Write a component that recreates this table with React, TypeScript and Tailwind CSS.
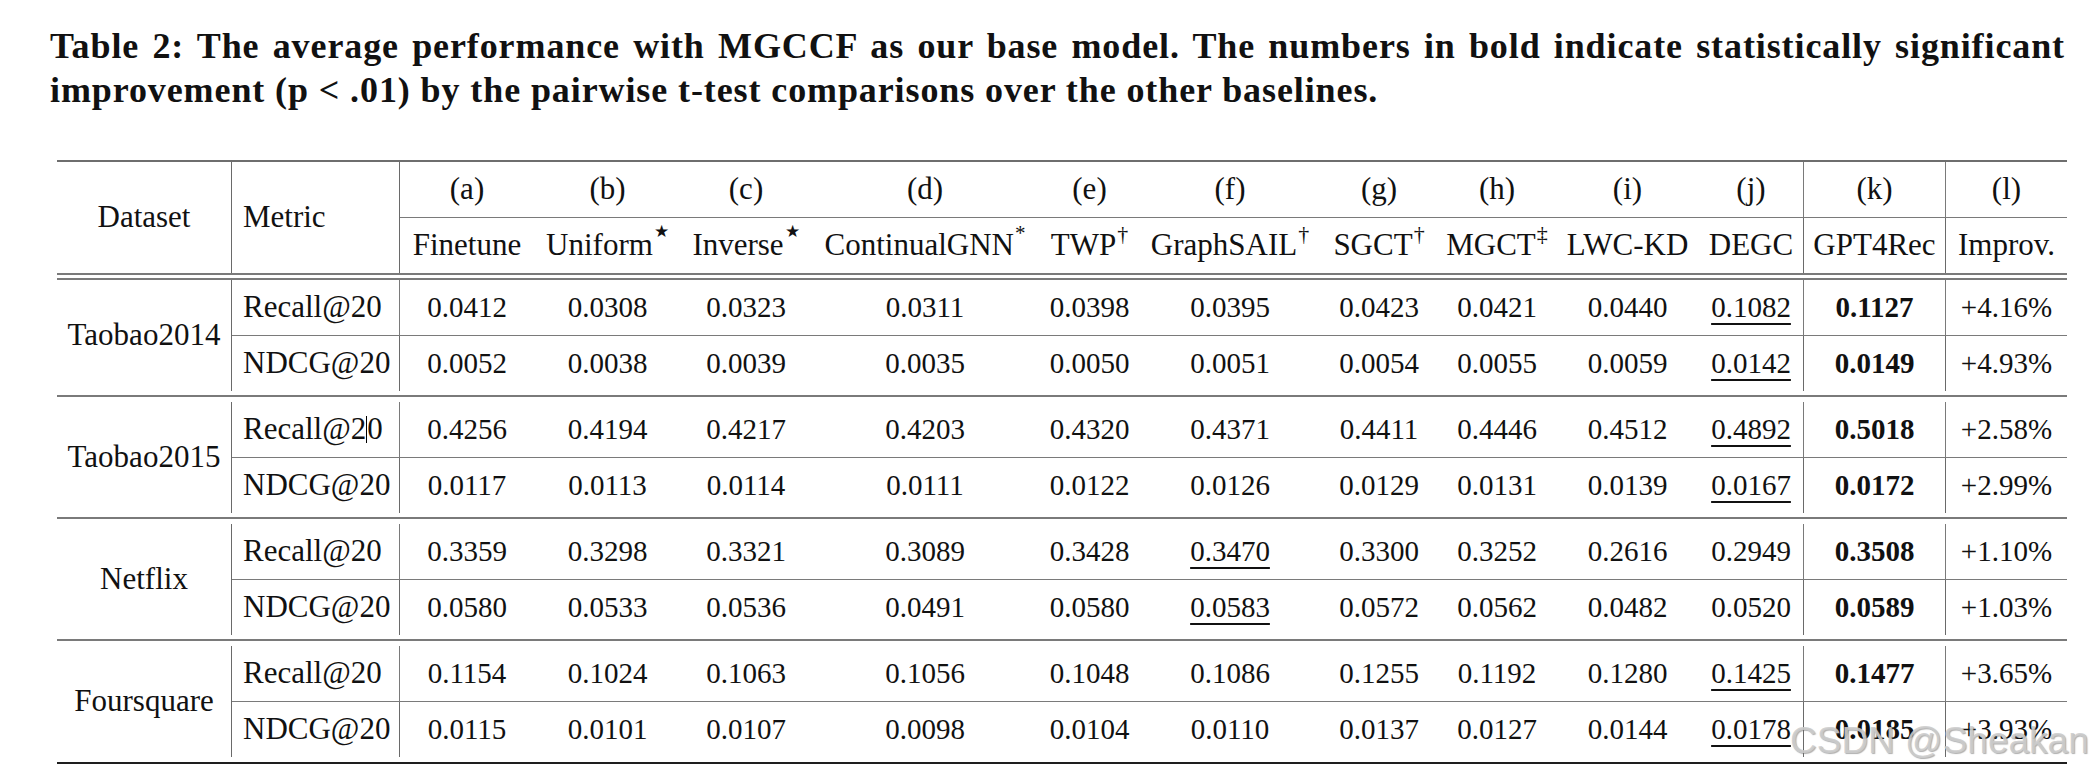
import React from "react";

const COLS =
  "grid grid-cols-[175px_168px_134px_147px_130px_228px_101px_180px_118px_118px_143px_105px_142px_121px]";

type Row = { m: React.ReactNode; v: string[]; k: string; l: string; u: number[] };
type Group = { name: string; rows: Row[] };

const groups: Group[] = [
  {
    name: "Taobao2014",
    rows: [
      { m: "Recall@20", v: ["0.0412", "0.0308", "0.0323", "0.0311", "0.0398", "0.0395", "0.0423", "0.0421", "0.0440", "0.1082"], k: "0.1127", l: "+4.16%", u: [9] },
      { m: "NDCG@20", v: ["0.0052", "0.0038", "0.0039", "0.0035", "0.0050", "0.0051", "0.0054", "0.0055", "0.0059", "0.0142"], k: "0.0149", l: "+4.93%", u: [9] },
    ],
  },
  {
    name: "Taobao2015",
    rows: [
      {
        m: (
          <>
            Recall@2
            <span className="inline-block w-px h-[27px] bg-black align-[-4px]" />0
          </>
        ),
        v: ["0.4256", "0.4194", "0.4217", "0.4203", "0.4320", "0.4371", "0.4411", "0.4446", "0.4512", "0.4892"],
        k: "0.5018",
        l: "+2.58%",
        u: [9],
      },
      { m: "NDCG@20", v: ["0.0117", "0.0113", "0.0114", "0.0111", "0.0122", "0.0126", "0.0129", "0.0131", "0.0139", "0.0167"], k: "0.0172", l: "+2.99%", u: [9] },
    ],
  },
  {
    name: "Netflix",
    rows: [
      { m: "Recall@20", v: ["0.3359", "0.3298", "0.3321", "0.3089", "0.3428", "0.3470", "0.3300", "0.3252", "0.2616", "0.2949"], k: "0.3508", l: "+1.10%", u: [5] },
      { m: "NDCG@20", v: ["0.0580", "0.0533", "0.0536", "0.0491", "0.0580", "0.0583", "0.0572", "0.0562", "0.0482", "0.0520"], k: "0.0589", l: "+1.03%", u: [5] },
    ],
  },
  {
    name: "Foursquare",
    rows: [
      { m: "Recall@20", v: ["0.1154", "0.1024", "0.1063", "0.1056", "0.1048", "0.1086", "0.1255", "0.1192", "0.1280", "0.1425"], k: "0.1477", l: "+3.65%", u: [9] },
      { m: "NDCG@20", v: ["0.0115", "0.0101", "0.0107", "0.0098", "0.0104", "0.0110", "0.0137", "0.0127", "0.0144", "0.0178"], k: "0.0185", l: "+3.93%", u: [9] },
    ],
  },
];

const letters = ["(a)", "(b)", "(c)", "(d)", "(e)", "(f)", "(g)", "(h)", "(i)", "(j)", "(k)", "(l)"];

const Star = () => <span className="text-[17px] relative top-[-14px] ml-[1px]">★</span>;
const Sup = ({ c, size = "text-[22px]" }: { c: string; size?: string }) => (
  <span className={`${size} relative top-[-12px] ml-[1px]`}>{c}</span>
);

const names: React.ReactNode[] = [
  "Finetune",
  <>Uniform<Star /></>,
  <>Inverse<Star /></>,
  <>ContinualGNN<Sup c="*" size="text-[21px]" /></>,
  <>TWP<Sup c="†" /></>,
  <>GraphSAIL<Sup c="†" /></>,
  <>SGCT<Sup c="†" /></>,
  <>MGCT<Sup c="‡" /></>,
  "LWC-KD",
  "DEGC",
  "GPT4Rec",
  "Improv.",
];

const VLINE = "border-r border-[#6a6a6a]";
const HLINE = "border-b border-[#7a7a7a]";

function GroupBlock({ g }: { g: Group }) {
  return (
    <div className={COLS}>
      <div className={`row-span-2 flex items-center justify-center text-[31px] ${VLINE}`}>{g.name}</div>
      {g.rows.map((r, ri) => {
        const line = ri === 0 ? HLINE : "";
        return (
          <React.Fragment key={ri}>
            <div className={`flex items-center pl-[11px] text-[31px] whitespace-nowrap ${VLINE} ${line} ${ri === 0 ? "h-[56px]" : "h-[55px]"}`}>
              {r.m}
            </div>
            {r.v.map((x, i) => (
              <div
                key={i}
                className={`flex items-center justify-center text-[29px] ${line} ${i === 9 ? VLINE : ""}`}
              >
                <span className={r.u.includes(i) ? "underline decoration-[1.6px] underline-offset-[6px]" : ""}>{x}</span>
              </div>
            ))}
            <div className={`flex items-center justify-center text-[29px] font-bold ${VLINE} ${line}`}>{r.k}</div>
            <div className={`flex items-center justify-center text-[29px] ${line}`}>{r.l}</div>
          </React.Fragment>
        );
      })}
    </div>
  );
}

export default function App() {
  return (
    <div
      className="relative w-[2099px] h-[781px] bg-white text-[#111] overflow-hidden"
      style={{ fontFamily: '"Liberation Serif", "Times New Roman", serif' }}
    >
      <div className="pl-[50px] pt-[24px] w-[2065px] font-bold text-[36px] leading-[44px] tracking-[0.9px]">
        <div className="whitespace-nowrap [text-align:justify] [text-align-last:justify]">
          Table 2: The average performance with MGCCF as our base model. The numbers in bold indicate statistically significant
        </div>
        <div className="whitespace-nowrap">
          improvement (p &lt; .01) by the pairwise t-test comparisons over the other baselines.
        </div>
      </div>

      <div className="ml-[57px] mt-[48px] w-[2010px]">
        {/* top rule */}
        <div className="h-[2px] bg-[#6e6e6e]" />
        {/* header */}
        <div className={COLS}>
          <div className={`row-span-2 flex items-center justify-center text-[31px] ${VLINE}`}>Dataset</div>
          <div className={`row-span-2 flex items-center pl-[11px] text-[31px] ${VLINE}`}>Metric</div>
          {letters.map((l, i) => (
            <div
              key={l}
              className={`h-[56px] flex items-center justify-center text-[31px] ${HLINE} ${i === 9 || i === 10 ? VLINE : ""}`}
            >
              {l}
            </div>
          ))}
          {names.map((n, i) => (
            <div
              key={i}
              className={`h-[55px] flex items-center justify-center text-[31px] whitespace-nowrap ${i === 9 || i === 10 ? VLINE : ""}`}
            >
              {n}
            </div>
          ))}
        </div>
        {/* double rule */}
        <div className="h-[2px] bg-[#7a7a7a]" />
        <div className="h-[3px]" />
        <div className="h-[2px] bg-[#7a7a7a]" />

        {groups.map((g, gi) => (
          <div key={g.name}>
            <GroupBlock g={g} />
            {gi < groups.length - 1 ? (
              <div className="pt-[4px] pb-[5px]">
                <div className="h-[2px] bg-[#7a7a7a]" />
              </div>
            ) : (
              <div className="pt-[5px]">
                <div className="h-[2px] bg-[#1e1e1e]" />
              </div>
            )}
          </div>
        ))}
      </div>

      <div
        className="absolute left-[1790px] top-[722px] text-[37px] leading-none whitespace-nowrap text-[rgba(205,205,205,0.9)] [text-shadow:1px_1px_1px_rgba(110,110,110,0.55)]"
        style={{ fontFamily: '"Liberation Sans", Arial, sans-serif' }}
      >
        CSDN @Sheakan
      </div>
    </div>
  );
}
